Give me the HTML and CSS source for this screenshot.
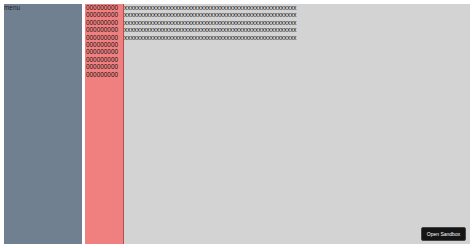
FILE: index.html
```html
<!DOCTYPE html>
<html>
<head>
<meta charset="utf-8">
<link rel="stylesheet" href="styles.css">
</head>
<body>
<div class="layout">
  <div class="menu">menu</div>
  <div class="list">
    <div>000000000</div><div>000000000</div><div>000000000</div><div>000000000</div><div>000000000</div>
    <div>000000000</div><div>000000000</div><div>000000000</div><div>000000000</div><div>000000000</div>
  </div>
  <div class="main">
    <div>xxxxxxxxxxxxxxxxxxxxxxxxxxxxxxxxxxxxxxxxxxxxxxxxxxxxxx</div>
    <div>xxxxxxxxxxxxxxxxxxxxxxxxxxxxxxxxxxxxxxxxxxxxxxxxxxxxxx</div>
    <div>xxxxxxxxxxxxxxxxxxxxxxxxxxxxxxxxxxxxxxxxxxxxxxxxxxxxxx</div>
    <div>xxxxxxxxxxxxxxxxxxxxxxxxxxxxxxxxxxxxxxxxxxxxxxxxxxxxxx</div>
    <div>xxxxxxxxxxxxxxxxxxxxxxxxxxxxxxxxxxxxxxxxxxxxxxxxxxxxxx</div>
  </div>
</div>
<a class="sandbox">Open Sandbox</a>
</body>
</html>
```
FILE: styles.css
```css
html, body { margin: 0; padding: 0; }
body {
  margin: 4px;
  font-family: "Liberation Sans", Arial, sans-serif;
  font-size: 6.4px;
  line-height: 7.4px;
  color: #000;
  background: #fff;
}
.layout {
  display: flex;
  height: 240px;
}
.menu {
  width: 78px;
  background: #708090;
  color: #1a2030;
}
.list {
  width: 37px;
  margin-left: 3px;
  padding-left: 1px;
  box-sizing: content-box;
  background: #f08080;
  border-right: 1px solid #b05050;
}
.list, .main { color: #111; }
.main {
  flex: 1;
  background: #d3d3d3;
}
.sandbox {
  position: fixed;
  right: 8px;
  bottom: 7px;
  width: 45px;
  height: 14px;
  box-sizing: border-box;
  background: #151515;
  color: #fff;
  border: 1px solid #444;
  border-radius: 2px;
  font-size: 5px;
  line-height: 12px;
  text-align: center;
}
```
